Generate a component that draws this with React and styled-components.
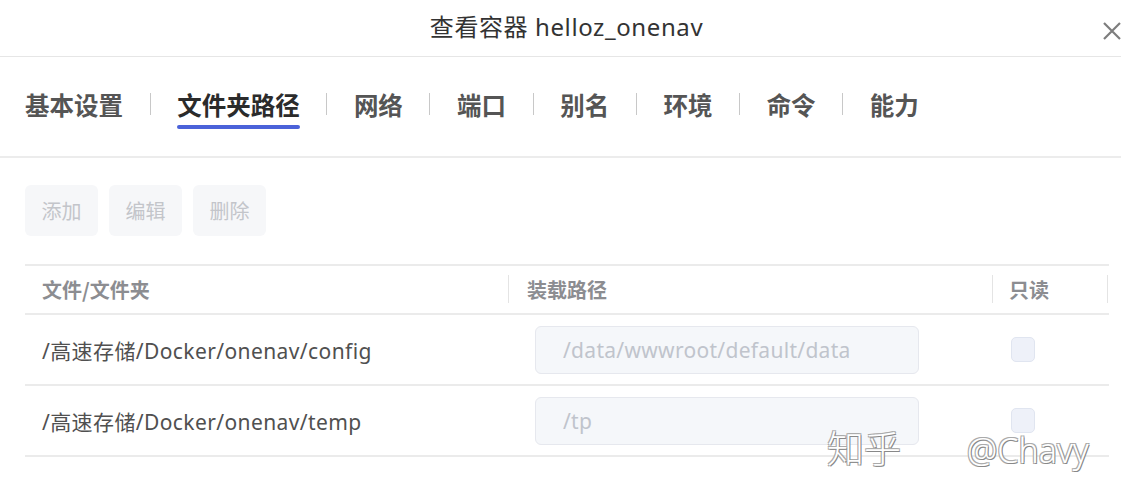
import React from "react";
import styled, { createGlobalStyle } from "styled-components";

const GlobalStyle = createGlobalStyle`
  html, body {
    margin: 0;
    padding: 0;
    background: #fff;
  }
  body {
    font-family: "Noto Sans", "Noto Sans CJK SC", sans-serif;
    color: #333;
  }
`;

const Dialog = styled.div`
  position: relative;
  width: 1121px;
  height: 498px;
  overflow: hidden;
  background: #fff;
`;

const Header = styled.div`
  height: 56px;
  display: grid;
  grid-template-columns: 1fr auto 1fr;
  align-items: center;
  border-bottom: 1px solid #e6e6e6;
`;

const Title = styled.div`
  grid-column: 2;
  font-size: 24px;
  letter-spacing: 0.6px;
  color: #333;
  margin: -6px 0 0 12px;
`;

const Close = styled.button`
  grid-column: 3;
  justify-self: end;
  border: 0;
  background: none;
  padding: 0;
  margin-right: -2px;
  margin-top: 6px;
  display: flex;
  cursor: pointer;
`;

const Tabs = styled.div`
  height: 99px;
  display: flex;
  align-items: center;
  gap: 26.6px;
  padding-left: 25px;
  border-bottom: 2px solid #ececec;
`;

const Tab = styled.div`
  position: relative;
  font-family: "Noto Sans CJK SC", sans-serif;
  font-size: 24.5px;
  font-weight: 700;
  color: ${p => (p.$active ? "#2b2b2b" : "#555")};
  line-height: 1;
  margin-top: -2px;
  &::after {
    content: "";
    display: ${p => (p.$active ? "block" : "none")};
    position: absolute;
    left: 0;
    right: 0;
    bottom: -11px;
    height: 4px;
    border-radius: 2px;
    background: #4b62d9;
  }
`;

const TabSep = styled.span`
  width: 1px;
  height: 22px;
  background: #c8c8c8;
  margin-top: -6px;
`;

const Toolbar = styled.div`
  display: flex;
  gap: 11px;
  padding: 27px 25px 28px;
`;

const Button = styled.button`
  width: 73px;
  height: 51px;
  border: 0;
  border-radius: 6px;
  background: #f6f7f9;
  color: #c3c5ca;
  font-family: "Noto Sans CJK SC", sans-serif;
  font-size: 20px;
`;

const Table = styled.div`
  margin: 0 12px 0 25px;
  display: grid;
  grid-template-columns: 483px 484px 1fr;
  border-top: 2px solid #ebebeb;
`;

const HeadCell = styled.div`
  position: relative;
  height: 47px;
  display: flex;
  align-items: center;
  padding-left: ${p => p.$pad}px;
  font-family: "Noto Sans CJK SC", sans-serif;
  font-size: 20px;
  font-weight: 700;
  color: #8c8d91;
  border-bottom: 2px solid #ebebeb;
  &::before {
    content: "";
    display: ${p => (p.$sep ? "block" : "none")};
    position: absolute;
    left: 0;
    top: 9px;
    width: 1px;
    height: 28px;
    background: #e4e4e4;
  }
  &::after {
    content: "";
    display: ${p => (p.$end ? "block" : "none")};
    position: absolute;
    right: 1px;
    top: 9px;
    width: 1px;
    height: 28px;
    background: #e4e4e4;
  }
`;

const Cell = styled.div`
  height: 69px;
  display: flex;
  align-items: center;
  padding-left: ${p => p.$pad}px;
  border-bottom: 2px solid #ebebeb;
  font-size: 21px;
  letter-spacing: 0.4px;
  color: #505050;
`;

const PathInput = styled.input`
  box-sizing: border-box;
  width: 384px;
  height: 48px;
  border: 1px solid #e6e8ee;
  border-radius: 6px;
  background: #f5f7fa;
  padding: 0 0 0 27px;
  font-family: inherit;
  font-size: 21px;
  letter-spacing: 0.3px;
  color: #c0c4cc;
  outline: none;
  &::placeholder {
    color: #c0c4cc;
  }
`;

const Check = styled.span`
  box-sizing: border-box;
  width: 24px;
  height: 25px;
  border-radius: 5px;
  border: 1px solid #e0e5f0;
  background: #eef1f9;
`;

const Watermark = styled.div`
  position: absolute;
  left: 827px;
  top: 420px;
  display: flex;
  align-items: baseline;
  gap: 66px;
  font-size: 37px;
  font-weight: 300;
  color: #fff;
  text-shadow: 1px 1px 0 #888, -1px -1px 0 #aaa, 1px -1px 0 #aaa, -1px 1px 0 #aaa;
  pointer-events: none;
`;

const Handle = styled.span`
  font-size: 34px;
`;

const tabs = ["基本设置", "文件夹路径", "网络", "端口", "别名", "环境", "命令", "能力"];

const rows = [
  { src: "/高速存储/Docker/onenav/config", dest: "/data/wwwroot/default/data" },
  { src: "/高速存储/Docker/onenav/temp", dest: "/tp" }
];

const App = () => (
  <Dialog>
    <GlobalStyle />
    <Header>
      <Title>查看容器 helloz_onenav</Title>
      <Close aria-label="close">
        <svg width="22" height="22" viewBox="0 0 22 22">
          <path d="M3 3 L19 19 M19 3 L3 19" stroke="#7d7d7d" strokeWidth="2.2" />
        </svg>
      </Close>
    </Header>
    <Tabs>
      {tabs.map((t, i) => (
        <React.Fragment key={t}>
          {i > 0 && <TabSep />}
          <Tab $active={i === 1}>{t}</Tab>
        </React.Fragment>
      ))}
    </Tabs>
    <Toolbar>
      <Button>添加</Button>
      <Button>编辑</Button>
      <Button>删除</Button>
    </Toolbar>
    <Table>
      <HeadCell $pad={17}>文件/文件夹</HeadCell>
      <HeadCell $pad={19} $sep>装载路径</HeadCell>
      <HeadCell $pad={17} $sep $end>只读</HeadCell>
      {rows.map(r => (
        <React.Fragment key={r.src}>
          <Cell $pad={17}>{r.src}</Cell>
          <Cell $pad={27}>
            <PathInput readOnly placeholder={r.dest} />
          </Cell>
          <Cell $pad={19}>
            <Check />
          </Cell>
        </React.Fragment>
      ))}
    </Table>
    <Watermark>
      <span>知乎</span>
      <Handle>@Chavy</Handle>
    </Watermark>
  </Dialog>
);

export default App;
